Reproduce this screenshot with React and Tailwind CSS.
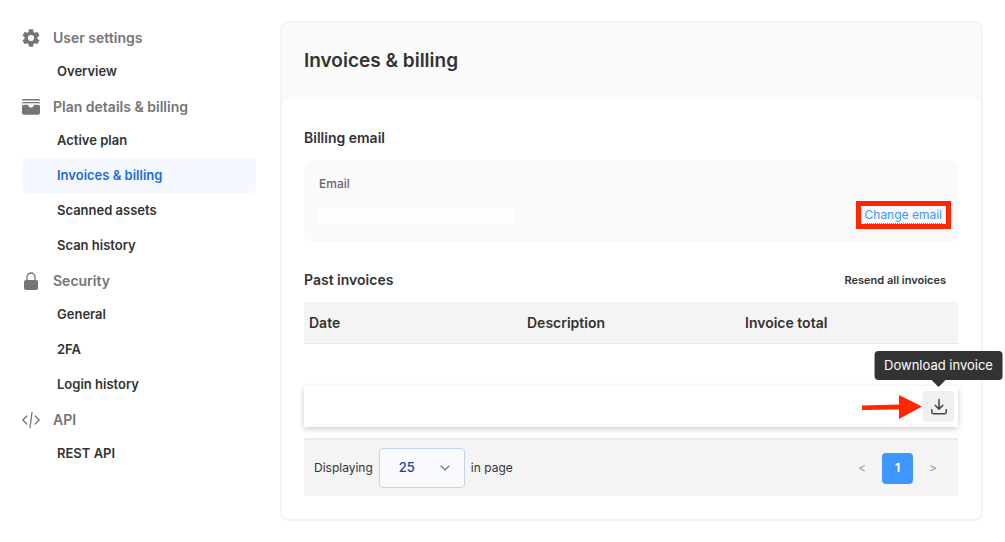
import React, { useState } from 'react';
import { ChevronDown } from 'lucide-react';

const GearIcon = () => (
    <svg viewBox="2 2 20 20" className="size-[18px]" fill="currentColor" aria-hidden="true">
        <path d="M19.14 12.94c.04-.3.06-.61.06-.94 0-.32-.02-.64-.07-.94l2.03-1.58c.18-.14.23-.41.12-.61l-1.92-3.32c-.12-.22-.37-.29-.59-.22l-2.39.96c-.5-.38-1.03-.7-1.62-.94l-.36-2.54c-.04-.24-.24-.41-.48-.41h-3.84c-.24 0-.43.17-.47.41l-.36 2.54c-.59.24-1.13.57-1.62.94l-2.39-.96c-.22-.08-.47 0-.59.22L2.74 8.87c-.12.21-.08.47.12.61l2.03 1.58c-.05.3-.09.63-.09.94s.02.64.07.94l-2.03 1.58c-.18.14-.23.41-.12.61l1.92 3.32c.12.22.37.29.59.22l2.39-.96c.5.38 1.03.7 1.62.94l.36 2.54c.05.24.24.41.48.41h3.84c.24 0 .44-.17.47-.41l.36-2.54c.59-.24 1.13-.56 1.62-.94l2.39.96c.22.08.47 0 .59-.22l1.92-3.32c.12-.22.07-.47-.12-.61l-2.01-1.58zM12 15.4a3.4 3.4 0 1 1 0-6.8 3.4 3.4 0 0 1 0 6.8z" />
    </svg>
);

const WalletIcon = () => (
    <svg viewBox="0 0 18 18" className="size-[18px]" fill="currentColor" aria-hidden="true">
        <path d="M0 3.2V2.6A1.6 1.6 0 0 1 1.6 1h14.8A1.6 1.6 0 0 1 18 2.6v.6a2 2 0 0 0-1.2-.7H1.2A2 2 0 0 0 0 3.2z" />
        <path d="M0 5.7A1.7 1.7 0 0 1 1.7 4h14.6A1.7 1.7 0 0 1 18 5.7v.3a2 2 0 0 0-1.5-.7h-15A2 2 0 0 0 0 6z" />
        <path d="M0 8.3a1.6 1.6 0 0 1 1.6-1.6h3.6c.8 0 1 .5 1.2 1C6.8 8.8 7.8 9.5 9 9.5s2.2-.7 2.6-1.8c.2-.5.4-1 1.2-1h3.6A1.6 1.6 0 0 1 18 8.3v6.5a2 2 0 0 1-2 2H2a2 2 0 0 1-2-2z" />
    </svg>
);

const LockIcon = () => (
    <svg viewBox="0 0 18 18" className="size-[18px]" aria-hidden="true">
        <rect x="2" y="8" width="14" height="10" rx="2" fill="currentColor" />
        <path d="M5 9V5a4 4 0 0 1 8 0v4" fill="none" stroke="currentColor" strokeWidth="1.3" />
    </svg>
);

const CodeIcon = () => (
    <svg viewBox="0 0 18 18" className="size-[18px]" fill="none" stroke="currentColor" strokeWidth="1.3" strokeLinecap="round" strokeLinejoin="round" aria-hidden="true">
        <path d="M4.8 5 .8 9l4 4M13.2 5l4 4-4 4M10 1.5l-2 15" />
    </svg>
);

const DownloadIcon = () => (
    <svg viewBox="0 0 18 18" className="size-[18px]" fill="none" stroke="currentColor" strokeWidth="1.5" strokeLinecap="round" strokeLinejoin="round" aria-hidden="true">
        <path d="M9 1.5V11M5.2 7.3 9 11.100l3.8-3.800M1.8 11.700v2.600a1.4 1.4 0 0 0 1.4 1.4h11.600a1.4 1.4 0 0 0 1.4-1.4v-2.600" />
    </svg>
);

const sections = [
    { title: 'User settings', icon: GearIcon, items: ['Overview'] },
    { title: 'Plan details & billing', icon: WalletIcon, items: ['Active plan', 'Invoices & billing', 'Scanned assets', 'Scan history'] },
    { title: 'Security', icon: LockIcon, items: ['General', '2FA', 'Login history'] },
    { title: 'API', icon: CodeIcon, items: ['REST API'] },
];

const Sidebar = ({ active }) => (
    <nav className="w-[234px] shrink-0 font-semibold">
        {sections.map(({ title, icon: Icon, items }) => (
            <section key={title}>
                <h2 className="flex h-[34px] items-center gap-[13px] pt-px text-sm text-[#757575]">
                    <Icon />
                    {title}
                </h2>
                <ul>
                    {items.map(item => (
                        <li key={item}>
                            <a
                                href="#"
                                className={
                                    item === active
                                        ? 'flex h-[35px] items-center rounded bg-[#f5f9ff] pl-[35px] pt-px text-[13px] text-[#1b6bdb]'
                                        : 'flex h-[35px] items-center rounded pl-[35px] pt-px text-[13px] text-[#333333]'
                                }
                            >
                                {item}
                            </a>
                        </li>
                    ))}
                </ul>
            </section>
        ))}
    </nav>
);

const DownloadButton = () => (
    <div className="relative size-[31px]">
        {/* Pointer towards the button */}
        <svg viewBox="0 0 60 24" className="absolute right-full top-1 mr-px h-6 w-[60px] max-w-none" fill="#ff2600" aria-hidden="true">
            <path d="M0 10.5 37 9.5V0l23 11.5L37 24v-9.5L0 15z" />
        </svg>
        <button
            type="button"
            aria-label="Download invoice"
            className="flex size-[31px] items-center justify-center rounded bg-[#f0f0f0] text-[#444444]"
        >
            <DownloadIcon />
        </button>
        <div role="tooltip" className="absolute bottom-full left-1/2 mb-[11px] -translate-x-1/2 whitespace-nowrap rounded bg-[#333333] px-[10px] text-[13px] leading-[29px] text-white">
            Download invoice
            <svg viewBox="0 0 14 7" className="absolute left-1/2 top-full h-[7px] w-[14px] -translate-x-1/2" fill="#333333" aria-hidden="true">
                <path d="M0 0h14L7 7z" />
            </svg>
        </div>
    </div>
);

const InvoiceTable = () => (
    <table className="w-full table-fixed border-separate border-spacing-0 text-left text-sm">
        <thead className="bg-[#f4f4f4]">
            <tr>
                {['Date', 'Description', 'Invoice total'].map(label => (
                    <th key={label} className="h-[42px] border-b border-[#e5e5e5] p-0 pl-[5px] font-semibold">
                        {label}
                    </th>
                ))}
            </tr>
        </thead>
        <tbody>
            <tr>
                <td colSpan={3} className="h-[42px] p-0" />
            </tr>
            <tr className="shadow-[0_2px_6px_rgba(0,0,0,0.2)]">
                <td className="h-[41px] p-0" />
                <td className="p-0" />
                <td className="p-0 pr-1">
                    <div className="flex justify-end">
                        <DownloadButton />
                    </div>
                </td>
            </tr>
        </tbody>
    </table>
);

const Pagination = () => {
    const [pageSize, setPageSize] = useState('25');

    return (
        <div className="mt-[11px] flex h-[58px] items-center justify-between border-t-2 border-[#eaeaea] bg-[#f4f4f4] pl-[10px] pr-[18px] text-xs">
            <div className="flex items-center gap-[6px]">
                <label htmlFor="page-size">Displaying</label>
                <div className="relative">
                    <select
                        id="page-size"
                        value={pageSize}
                        onChange={e => setPageSize(e.target.value)}
                        className="block h-10 w-[86px] appearance-none rounded border border-[#c3d3ec] bg-[#f8fafd] pl-[19px] text-[13px] font-medium text-[#1e429f]"
                    >
                        <option value="25">25</option>
                        <option value="50">50</option>
                        <option value="100">100</option>
                    </select>
                    <ChevronDown className="pointer-events-none absolute right-3 top-3 size-4 text-[#6b7280]" strokeWidth={1.75} />
                </div>
                <span>in page</span>
            </div>
            <div className="flex items-center gap-[13px] font-medium text-[#a3a3a3]">
                <button type="button" aria-label="Previous page" className="w-[14px]">&lt;</button>
                <button type="button" className="size-[31px] rounded bg-[#4096ff] font-bold text-white">1</button>
                <button type="button" aria-label="Next page" className="w-[14px]">&gt;</button>
            </div>
        </div>
    );
};

export default function App() {
    return (
        <div className="flex items-start gap-6 bg-white px-[22px] py-5 font-['Inter',sans-serif] text-[#333333]">
            <Sidebar active="Invoices & billing" />

            <main className="mt-px min-w-0 flex-1 rounded-lg border-2 border-[#f4f4f4] bg-[#fafafa]">
                <h1 className="px-[22px] py-6 text-[19px] font-semibold leading-7">Invoices &amp; billing</h1>

                <div className="rounded-lg bg-white pb-[23px] pl-[22px] pr-[23px] pt-[29px]">
                    <h2 className="text-sm font-semibold">Billing email</h2>
                    <div className="mt-3 flex items-end justify-between rounded-lg bg-[#fafafa] px-[15px] pb-[13px] pt-4">
                        <div className="pb-[6px]">
                            <p className="text-xs font-medium text-[#666666]">Email</p>
                            <div className="mt-[17px] h-[14px] w-[194px] bg-white" />
                        </div>
                        <div className="-mr-2 border-[5px] border-[#ff2600] px-1">
                            <a href="#" className="block border-b border-dotted border-[#4096ff] text-xs leading-[17px] text-[#4096ff]">
                                Change email
                            </a>
                        </div>
                    </div>

                    <div className="mb-3 mt-7 flex items-center justify-between pr-3">
                        <h2 className="text-sm font-semibold">Past invoices</h2>
                        <button type="button" className="text-[11px] font-semibold">Resend all invoices</button>
                    </div>
                    <InvoiceTable />
                    <Pagination />
                </div>
            </main>
        </div>
    );
}
